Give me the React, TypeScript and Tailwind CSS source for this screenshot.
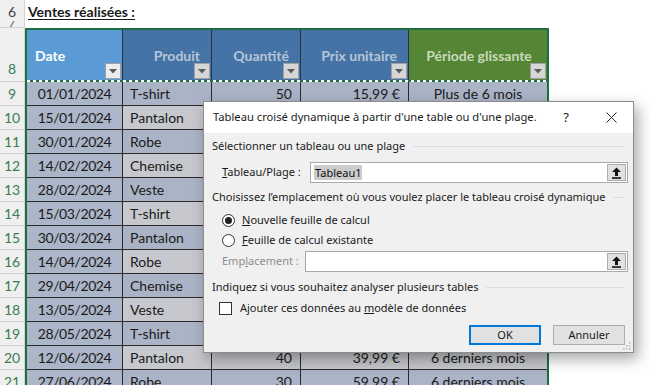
import React from 'react';

// Données du tableau "Ventes réalisées"
interface Vente {
  date: string;
  produit: string;
  qte?: string;
  prix?: string;
  periode?: string;
}

const ventes: Vente[] = [
  { date: '01/01/2024', produit: 'T-shirt', qte: '50', prix: '15,99 €', periode: 'Plus de 6 mois' },
  { date: '15/01/2024', produit: 'Pantalon' },
  { date: '30/01/2024', produit: 'Robe' },
  { date: '14/02/2024', produit: 'Chemise' },
  { date: '28/02/2024', produit: 'Veste' },
  { date: '15/03/2024', produit: 'T-shirt' },
  { date: '30/03/2024', produit: 'Pantalon' },
  { date: '14/04/2024', produit: 'Robe' },
  { date: '29/04/2024', produit: 'Chemise' },
  { date: '13/05/2024', produit: 'Veste' },
  { date: '28/05/2024', produit: 'T-shirt' },
  { date: '12/06/2024', produit: 'Pantalon', qte: '40', prix: '39,99 €', periode: '6 derniers mois' },
  { date: '27/06/2024', produit: 'Robe', qte: '30', prix: '59,99 €', periode: '6 derniers mois' },
];

const sheetFont = "font-['Lato','Liberation_Sans',sans-serif]";
const uiFont = "font-['Noto_Sans','Open_Sans',sans-serif]";

function FilterButton({ light }: { light?: boolean }) {
  return (
    <div
      className={`absolute bottom-[1px] right-[1px] flex h-[16px] w-[16px] items-center justify-center border border-[#a0a0a0] ${
        light ? 'bg-[#ececec]' : 'bg-[#d6d6d6]'
      }`}
    >
      <svg width="8" height="5" viewBox="0 0 8 5">
        <path d="M0 0 L8 0 L4 4.5 Z" fill="#5a5a5a" />
      </svg>
    </div>
  );
}

function UploadIcon() {
  return (
    <svg width="11" height="12" viewBox="0 0 11 12">
      <path d="M5.5 0.5 L10 5 L7 5 L7 9 L4 9 L4 5 L1 5 Z" fill="#111" />
      <rect x="1" y="10.2" width="9" height="1.6" fill="#111" />
    </svg>
  );
}

function RefInput({ value, className }: { value?: string; className: string }) {
  return (
    <div className={`flex h-[21px] items-stretch border border-[#a9a9a9] bg-white ${className}`}>
      <div className="flex flex-1 items-center pl-[3px]">
        {value && <span className="bg-[#cccccc] px-[1px] leading-[15px] text-[#111]">{value}</span>}
      </div>
      <div className="m-[1px] flex w-[19px] items-center justify-center border border-[#adadad] bg-[#e1e1e1]">
        <UploadIcon />
      </div>
    </div>
  );
}

function SectionTitle({ children }: { children: React.ReactNode }) {
  return (
    <div className="flex h-[14px] items-center gap-[8px] pr-[8px]">
      <span className="whitespace-nowrap">{children}</span>
      <div className="h-px flex-1 bg-[#dcdcdc]" />
    </div>
  );
}

function Radio({ checked, children }: { checked?: boolean; children: React.ReactNode }) {
  return (
    <div className="flex h-[14px] items-center gap-[7px] pl-[10px]">
      <div className="flex h-[13px] w-[13px] items-center justify-center rounded-full border border-[#333] bg-white">
        {checked && <div className="h-[7px] w-[7px] rounded-full bg-[#222]" />}
      </div>
      <span>{children}</span>
    </div>
  );
}

function PivotDialog() {
  return (
    <div
      className={`absolute left-[203px] top-[101px] flex h-[252px] w-[431px] flex-col border border-[#8c8c8c] bg-[#f0f0f0] text-[11px] text-[#1a1a1a] shadow-[4px_6px_14px_rgba(0,0,0,0.35)] ${uiFont}`}
    >
      {/* barre de titre */}
      <div className="flex h-[31px] items-center bg-white pl-[9px]">
        <span className="flex-1 whitespace-nowrap text-[11.2px]">
          Tableau croisé dynamique à partir d'une table ou d'une plage.
        </span>
        <span className="mr-[37px] text-[13px]">?</span>
        <svg className="mr-[16px]" width="11" height="11" viewBox="0 0 11 11">
          <path d="M0.5 0.5 L10.5 10.5 M10.5 0.5 L0.5 10.5" stroke="#222" strokeWidth="1" />
        </svg>
      </div>

      <div className="flex flex-1 flex-col pl-[8px]">
        <div className="mt-[6px]">
          <SectionTitle>Sélectionner un tableau ou une plage</SectionTitle>
        </div>
        <div className="mt-[9px] flex items-center pl-[10px]">
          <span className="w-[88px]">
            <span className="underline">T</span>ableau/Plage :
          </span>
          <RefInput value="Tableau1" className="w-[318px]" />
        </div>

        <div className="mt-[7px]">
          <SectionTitle>Choisissez l’emplacement où vous voulez placer le tableau croisé dynamique</SectionTitle>
        </div>
        <div className="mt-[9px]">
          <Radio checked>
            <span className="underline">N</span>ouvelle feuille de calcul
          </Radio>
        </div>
        <div className="mt-[6px]">
          <Radio>
            <span className="underline">F</span>euille de calcul existante
          </Radio>
        </div>
        <div className="mt-[4px] flex items-center pl-[10px]">
          <span className="w-[83px] text-[#8d8d8d]">
            Emp<span className="underline">l</span>acement :
          </span>
          <RefInput className="w-[323px]" />
        </div>

        <div className="mt-[8px]">
          <SectionTitle>Indiquez si vous souhaitez analyser plusieurs tables</SectionTitle>
        </div>
        <div className="mt-[7px] flex h-[14px] items-center gap-[8px] pl-[7px]">
          <div className="h-[13px] w-[13px] border border-[#333] bg-white" />
          <span>
            Ajouter ces données au <span className="underline">m</span>odèle de données
          </span>
        </div>

        <div className="mt-[10px] flex justify-end gap-[12px] pr-[8px]">
          <button className="flex h-[20px] w-[72px] items-center justify-center border-2 border-[#0078d7] bg-[#e1e1e1]">
            OK
          </button>
          <button className="flex h-[20px] w-[72px] items-center justify-center border border-[#adadad] bg-[#e1e1e1]">
            Annuler
          </button>
        </div>
      </div>

      {/* poignée de redimensionnement */}
      <svg className="absolute bottom-[2px] right-[2px]" width="10" height="10" viewBox="0 0 10 10">
        {[
          [8, 2],
          [8, 5],
          [5, 5],
          [8, 8],
          [5, 8],
          [2, 8],
        ].map(([x, y], i) => (
          <rect key={i} x={x} y={y} width="1.5" height="1.5" fill="#b5b5b5" />
        ))}
      </svg>
    </div>
  );
}

export default function App() {
  return (
    <div className={`relative h-[385px] w-[651px] overflow-hidden bg-white text-[14px] text-[#1a1a1a] ${sheetFont}`}>
      <div className="flex">
        {/* en-têtes de lignes */}
        <div className="flex w-[25px] flex-col border-r border-[#d4d4d4] bg-[#efefef] text-[14px]">
          <div className="flex h-[21px] items-end justify-center pb-[1px] leading-[16px] text-[#444]">6</div>
          <div className="flex h-[7px] items-end justify-center overflow-hidden border-b border-[#d4d4d4] text-[12px] leading-[9px] text-[#666]">
            7
          </div>
          <div className="flex h-[54px] items-end justify-center border-b border-[#d4d4d4] pb-[2px] text-[#3a7d4f]">8</div>
          {ventes.map((_, i) => (
            <div
              key={i}
              className="flex h-[24px] shrink-0 items-center justify-center border-b border-[#d4d4d4] text-[#3a7d4f]"
            >
              {i + 9}
            </div>
          ))}
        </div>

        {/* feuille */}
        <div className="flex flex-col">
          <div className="flex h-[21px] items-end pb-[1px] pl-[3px] leading-[16px]">
            <span className="font-bold underline underline-offset-2">Ventes réalisées :</span>
          </div>
          <div className="h-[7px]" />

          <div className="w-[524px] border-x-2 border-t-2 border-[#1e6e42]">
            {/* ligne d'en-tête */}
            <div className="flex h-[50px] font-bold">
              <div className="relative flex w-[96px] items-center border-r border-[#23344a] bg-[#5b9bd5] pl-[8px] text-white">
                Date
                <FilterButton light />
              </div>
              <div className="relative flex w-[89px] items-center justify-end border-r border-[#23344a] bg-[#4673a5] pr-[11px] text-[#b5c5d8]">
                Produit
                <FilterButton />
              </div>
              <div className="relative flex w-[89px] items-center justify-end border-r border-[#23344a] bg-[#4673a5] pr-[11px] text-[#b5c5d8]">
                Quantité
                <FilterButton />
              </div>
              <div className="relative flex w-[108px] items-center justify-end border-r border-[#23344a] bg-[#4673a5] pr-[11px] text-[#b5c5d8]">
                Prix unitaire
                <FilterButton />
              </div>
              <div className="relative flex flex-1 items-center justify-center bg-[#558636] pl-[2px] text-[#c9d9b9]">
                Période glissante
                <FilterButton />
              </div>
            </div>
            <div className="h-[2px] bg-[repeating-linear-gradient(90deg,#ffffff_0_3px,#1e6e42_3px_6px)]" />

            {/* lignes de données */}
            {ventes.map((v, i) => {
              const band = i % 2 === 0;
              const cell = band ? 'bg-[#aab4c6]' : 'bg-[#c6c8cd]';
              return (
                <div key={i} className="flex h-[24px] border-b border-[#2a2a2a]">
                  <div className="flex w-[96px] items-center justify-center border-r border-[#2a2a2a] bg-[#abb6c8] tracking-[-0.4px]">
                    {v.date}
                  </div>
                  <div className={`flex w-[89px] items-center border-r border-[#2a2a2a] pl-[7px] ${cell}`}>{v.produit}</div>
                  <div className={`flex w-[89px] items-center justify-end border-r border-[#2a2a2a] pr-[8px] ${cell}`}>
                    {v.qte}
                  </div>
                  <div className={`flex w-[108px] items-center justify-end border-r border-[#2a2a2a] pr-[8px] ${cell}`}>
                    {v.prix}
                  </div>
                  <div className={`flex flex-1 items-center justify-center ${cell}`}>{v.periode}</div>
                </div>
              );
            })}
          </div>
        </div>
      </div>

      <PivotDialog />
    </div>
  );
}
